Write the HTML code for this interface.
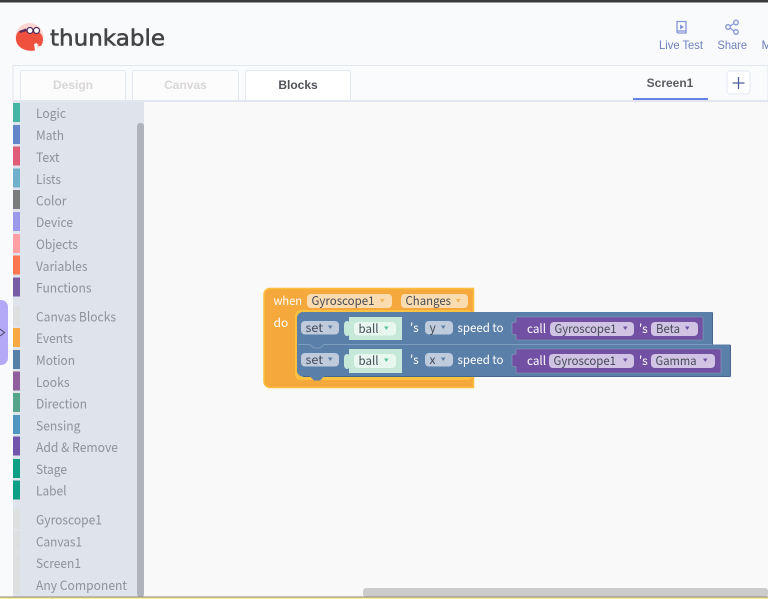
<!DOCTYPE html>
<html><head><meta charset="utf-8">
<style>
html,body{margin:0;padding:0;width:768px;height:599px;overflow:hidden;background:#f9fafc}
svg{position:absolute;left:0;top:0;display:block}
.s{font-family:"Noto Sans CJK JP","Liberation Sans",sans-serif;font-size:13px;fill:#8e929b}
.b{font-family:"Noto Sans CJK JP","Liberation Sans",sans-serif;font-size:12px;fill:#fff}
.d{font-family:"Noto Sans CJK JP","Liberation Sans",sans-serif;font-size:12px;fill:#444a55}
.a{font-family:"Liberation Sans",sans-serif}
</style></head><body>
<svg width="768" height="599" viewBox="0 0 768 599" xmlns="http://www.w3.org/2000/svg">
<rect width="768" height="599" fill="#f9fafc"/>
<rect width="768" height="2.5" fill="#3a3a3c"/>
<!-- logo -->
<circle cx="29.5" cy="37" r="14" fill="#fbd5d1"/>
<path d="M18 32 C22 29 30 28 35 30 C41 32 43.5 37 43 41 C42 43 39 43 37 44 L36 50 C30 52 22 50 18 45 C15 41 15.500 35 18 32Z" fill="#f0513f"/>
<path d="M19 31 L26 28.500 L27 31 L20 33Z" fill="#5a2d5c"/>
<circle cx="30" cy="30.500" r="3" fill="#fff" stroke="#4d2a5c" stroke-width="1.200"/>
<circle cx="36.500" cy="30.500" r="3" fill="#fff" stroke="#4d2a5c" stroke-width="1.200"/>
<path d="M34 44 L37 43 L37 50 L35 50Z" fill="#fff"/>
<path d="M38 42 L43 42 L41 46 L38.500 46Z" fill="#f0513f"/>
<text x="50" y="45.500" font-family="'DejaVu Sans',sans-serif" font-size="22" fill="#444446" stroke="#444446" stroke-width=".55" textLength="115" lengthAdjust="spacingAndGlyphs">thunkable</text>
<!-- header actions -->
<g fill="none" stroke="#8496d4" stroke-width="1.300">
<path d="M677 21.500 H686 V33 H678.500 A1.500 1.500 0 0 1 677 31.500Z"/>
<path d="M677 31 H686"/>
</g>
<path d="M680 24.500 L684 27 L680 29.500Z" fill="#8496d4"/>
<g fill="none" stroke="#8496d4" stroke-width="1.300">
<circle cx="736" cy="22.500" r="2.300"/><circle cx="736" cy="32" r="2.300"/><circle cx="728" cy="27" r="2.300"/>
<path d="M730 26 L734 23.500 M730 28 L734 31"/>
</g>
<g class="a" font-size="12" fill="#6f80bd">
<text x="659" y="49" textLength="44" lengthAdjust="spacingAndGlyphs">Live Test</text>
<text x="717.500" y="49" textLength="29.500" lengthAdjust="spacingAndGlyphs">Share</text>
<text x="761.500" y="49">M</text>
</g>
<!-- panel -->
<rect x="13" y="65.500" width="755" height="36" fill="#fafbfd" stroke="#e2e7f1"/>
<rect x="144" y="102" width="624" height="495" fill="#f9f9f9"/>
<g fill="#fcfcfd" stroke="#e3e7f2">
<path d="M20.500 100.500 V72.500 a2 2 0 0 1 2-2 H123.500 a2 2 0 0 1 2 2 V100.500"/>
<path d="M132.500 100.500 V72.500 a2 2 0 0 1 2-2 H236.500 a2 2 0 0 1 2 2 V100.500"/>
<path d="M245.500 100.500 V72.500 a2 2 0 0 1 2-2 H348.500 a2 2 0 0 1 2 2 V100.500" fill="#fff"/>
</g>
<rect x="13" y="100" width="755" height="1.500" fill="#e2e6f1"/>
<g class="a" font-size="12" font-weight="700" text-anchor="middle">
<text x="73" y="89" fill="#d9d6d6">Design</text>
<text x="185.500" y="89" fill="#d9d6d6">Canvas</text>
<text x="298" y="89" fill="#50535a">Blocks</text>
<text x="670" y="87" fill="#5a5c62">Screen1</text>
</g>
<rect x="633" y="98" width="75" height="2" fill="#6682e8"/>
<rect x="727" y="71" width="23" height="23" rx="3" fill="#fff" stroke="#e3e7f2"/>
<path d="M738.500 77 V89 M732.500 83 H744.500" stroke="#4d5f94" stroke-width="1.300" fill="none"/>
<!-- sidebar -->
<rect x="13" y="102" width="131" height="495" fill="#dfe3eb"/>
<rect x="137" y="123" width="7" height="474" rx="3" fill="#b0b3b9"/>
<g>
<rect x="13" y="103" width="7" height="19" fill="#45b5a4"/>
<rect x="13" y="125" width="7" height="19" fill="#6485cc"/>
<rect x="13" y="146.500" width="7" height="19" fill="#e05c78"/>
<rect x="13" y="168.500" width="7" height="19" fill="#6fb0cc"/>
<rect x="13" y="190" width="7" height="19" fill="#7c7c7c"/>
<rect x="13" y="212" width="7" height="19" fill="#9c98ea"/>
<rect x="13" y="234" width="7" height="19" fill="#ff9ea3"/>
<rect x="13" y="255.500" width="7" height="19" fill="#ff7750"/>
<rect x="13" y="277.500" width="7" height="19" fill="#7a5ba6"/>
<rect x="13" y="306" width="7" height="20" fill="#dedfe0"/>
<rect x="13" y="328" width="7" height="19" fill="#f7a941"/>
<rect x="13" y="350" width="7" height="19" fill="#5780a8"/>
<rect x="13" y="371.500" width="7" height="19" fill="#915f9e"/>
<rect x="13" y="393" width="7" height="19" fill="#56a489"/>
<rect x="13" y="415" width="7" height="19" fill="#4f97c0"/>
<rect x="13" y="436.500" width="7" height="19" fill="#7355ab"/>
<rect x="13" y="459" width="7" height="19" fill="#0ea084"/>
<rect x="13" y="480.500" width="7" height="19" fill="#0ea084"/>
<rect x="13" y="509" width="7" height="20" fill="#dedfe0"/>
<rect x="13" y="531" width="7" height="20" fill="#dedfe0"/>
<rect x="13" y="553" width="7" height="20" fill="#dedfe0"/>
<rect x="13" y="574" width="7" height="20" fill="#dedfe0"/>
</g>
<g class="s" lengthAdjust="spacingAndGlyphs">
<text x="36" y="118" textLength="30" lengthAdjust="spacingAndGlyphs">Logic</text>
<text x="36" y="140" textLength="28" lengthAdjust="spacingAndGlyphs">Math</text>
<text x="36" y="162" textLength="23.500" lengthAdjust="spacingAndGlyphs">Text</text>
<text x="36" y="184" textLength="25" lengthAdjust="spacingAndGlyphs">Lists</text>
<text x="36" y="205.500" textLength="30.500" lengthAdjust="spacingAndGlyphs">Color</text>
<text x="36" y="227" textLength="37" lengthAdjust="spacingAndGlyphs">Device</text>
<text x="36" y="249" textLength="42" lengthAdjust="spacingAndGlyphs">Objects</text>
<text x="36" y="271" textLength="51.500" lengthAdjust="spacingAndGlyphs">Variables</text>
<text x="36" y="292.500" textLength="55.500" lengthAdjust="spacingAndGlyphs">Functions</text>
<text x="36" y="321.500" textLength="80" lengthAdjust="spacingAndGlyphs">Canvas Blocks</text>
<text x="36" y="343" textLength="37" lengthAdjust="spacingAndGlyphs">Events</text>
<text x="36" y="365" textLength="39" lengthAdjust="spacingAndGlyphs">Motion</text>
<text x="36" y="387" textLength="33.500" lengthAdjust="spacingAndGlyphs">Looks</text>
<text x="36" y="408.500" textLength="51" lengthAdjust="spacingAndGlyphs">Direction</text>
<text x="36" y="430.500" textLength="44.500" lengthAdjust="spacingAndGlyphs">Sensing</text>
<text x="36" y="452" textLength="82" lengthAdjust="spacingAndGlyphs">Add &amp; Remove</text>
<text x="36" y="474" textLength="31" lengthAdjust="spacingAndGlyphs">Stage</text>
<text x="36" y="495.500" textLength="30.500" lengthAdjust="spacingAndGlyphs">Label</text>
<text x="36" y="524.500" textLength="66" lengthAdjust="spacingAndGlyphs">Gyroscope1</text>
<text x="36" y="546.500" textLength="46" lengthAdjust="spacingAndGlyphs">Canvas1</text>
<text x="36" y="568" textLength="45" lengthAdjust="spacingAndGlyphs">Screen1</text>
<text x="36" y="590" textLength="91" lengthAdjust="spacingAndGlyphs">Any Component</text>
</g>
<!-- handle -->
<path d="M0 300 H1 a7 7 0 0 1 7 7 V358 a7 7 0 0 1-7 7 H0Z" fill="#b3a9f6"/>
<path d="M0 329 L4.500 332.500 L0 336" fill="none" stroke="#4a4a5a" stroke-width="1"/>
<!-- scrollbar & bottom -->
<rect x="363" y="588" width="405" height="9" rx="3" fill="#cccccc"/>
<rect x="0" y="596.500" width="768" height="1" fill="#8a8a80"/>
<rect x="0" y="597.500" width="768" height="1.500" fill="#f7ea9a"/>
<!-- orange block -->
<path d="M270 288.500 H473.500 V387.500 H270 a6 6 0 0 1-6-6 V294.500 a6 6 0 0 1 6-6Z" fill="#f5a93c" stroke="#fbbe3d" stroke-width="1.500"/>
<rect x="295" y="310" width="178.500" height="70" rx="6" fill="#fcc23f"/>
<!-- blue blocks -->
<path d="M303 312 H712.500 V344.500 H730.500 V376.500 H324 L320 380.500 H314 L310 376.500 H303 a6 6 0 0 1-6-6 V318 a6 6 0 0 1 6-6Z" fill="#5a7fa8"/>
<path d="M298 344.500 H310 L314 348 H320 L324 344.500 H712.500" fill="none" stroke="#7d9dc0" stroke-width="1"/>
<path d="M712.500 312.500 V344.500 M730.500 345 V376.500" stroke="#46688e" stroke-width="1" fill="none"/>
<path d="M303 376.500 H310 M324 376.500 H730.500" stroke="#46688e" stroke-width="1" fill="none"/>
<!-- top row -->
<text x="273.500" y="305" class="b" textLength="28.500" lengthAdjust="spacingAndGlyphs">when</text>
<text x="273.500" y="327" class="b">do</text>
<rect x="307" y="294" width="85" height="14" rx="4" fill="#fbdcb0"/>
<text x="311.500" y="305" class="d" textLength="63" lengthAdjust="spacingAndGlyphs">Gyroscope1</text>
<path d="M380 299 h4.500 l-2.250 3.500Z" fill="#f5b050"/>
<rect x="401" y="294" width="67" height="14" rx="4" fill="#fbdcb0"/>
<text x="405.500" y="305" class="d" textLength="45.500" lengthAdjust="spacingAndGlyphs">Changes</text>
<path d="M456 299 h4.500 l-2.250 3.500Z" fill="#f5b050"/>
<!-- row 1 -->
<rect x="301" y="321" width="38" height="13.500" rx="4" fill="#bdcbdc"/>
<text x="305.500" y="332" class="d" textLength="17.500" lengthAdjust="spacingAndGlyphs">set</text>
<path d="M328 325.500 h4.500 l-2.250 3.500Z" fill="#5a7fa8"/>
<path d="M349 317 H402 V340 H349 V335 a2 2 0 0 1 -2 1 a3 4 0 0 1-3-4 V325 a3 4 0 0 1 3-4 a2 2 0 0 1 2 1Z" fill="#c5e8d8"/>
<rect x="354" y="322" width="42" height="13.500" rx="4" fill="#e8f7f0"/>
<text x="358.500" y="333" class="d" textLength="20" lengthAdjust="spacingAndGlyphs">ball</text>
<path d="M384 326.500 h4.500 l-2.250 3.500Z" fill="#5cc49a"/>
<text x="410" y="332" class="b">'s</text>
<rect x="425" y="321" width="28" height="13.500" rx="4" fill="#bdcbdc"/>
<text x="429.500" y="332" class="d">y</text>
<path d="M441 325.500 h4.500 l-2.250 3.500Z" fill="#5a7fa8"/>
<text x="457.500" y="332" class="b" textLength="46" lengthAdjust="spacingAndGlyphs">speed to</text>
<path d="M516 317 H703 V340 H516 V335 L512 334 V323 L516 322Z" fill="#7250a3" stroke="#8c9fbb" stroke-width=".6"/>
<text x="527" y="333" class="b" textLength="19" lengthAdjust="spacingAndGlyphs">call</text>
<rect x="550" y="322" width="84" height="14" rx="4" fill="#d0c3e3"/>
<text x="554.500" y="333" class="d" textLength="62" lengthAdjust="spacingAndGlyphs">Gyroscope1</text>
<path d="M623 326.500 h4.500 l-2.250 3.500Z" fill="#7250a3"/>
<text x="639" y="333" class="b">'s</text>
<rect x="651" y="322" width="47" height="14" rx="4" fill="#d0c3e3"/>
<text x="656" y="333" class="d" textLength="24" lengthAdjust="spacingAndGlyphs">Beta</text>
<path d="M685 326.500 h4.500 l-2.250 3.500Z" fill="#7250a3"/>
<!-- row 2 -->
<rect x="301" y="353" width="38" height="13.500" rx="4" fill="#bdcbdc"/>
<text x="305.500" y="364" class="d" textLength="17.500" lengthAdjust="spacingAndGlyphs">set</text>
<path d="M328 357.500 h4.500 l-2.250 3.500Z" fill="#5a7fa8"/>
<path d="M349 349 H402 V373 H349 V368 a2 2 0 0 1 -2 1 a3 4 0 0 1-3-4 V358 a3 4 0 0 1 3-4 a2 2 0 0 1 2 1Z" fill="#c5e8d8"/>
<rect x="354" y="354" width="42" height="14" rx="4" fill="#e8f7f0"/>
<text x="358.500" y="365" class="d" textLength="20" lengthAdjust="spacingAndGlyphs">ball</text>
<path d="M384 358.500 h4.500 l-2.250 3.500Z" fill="#5cc49a"/>
<text x="410" y="364" class="b">'s</text>
<rect x="425" y="353" width="28" height="13.500" rx="4" fill="#bdcbdc"/>
<text x="429.500" y="364" class="d">x</text>
<path d="M441 357.500 h4.500 l-2.250 3.500Z" fill="#5a7fa8"/>
<text x="457.500" y="364" class="b" textLength="46" lengthAdjust="spacingAndGlyphs">speed to</text>
<path d="M516 349 H721 V373 H516 V367 L512 366 V355 L516 354Z" fill="#7250a3" stroke="#8c9fbb" stroke-width=".6"/>
<text x="527" y="365" class="b" textLength="19" lengthAdjust="spacingAndGlyphs">call</text>
<rect x="549" y="354" width="85" height="14" rx="4" fill="#d0c3e3"/>
<text x="553.500" y="365" class="d" textLength="62.500" lengthAdjust="spacingAndGlyphs">Gyroscope1</text>
<path d="M623 358.500 h4.500 l-2.250 3.500Z" fill="#7250a3"/>
<text x="639" y="365" class="b">'s</text>
<rect x="651" y="354" width="64" height="14" rx="4" fill="#d0c3e3"/>
<text x="655.500" y="365" class="d" textLength="41" lengthAdjust="spacingAndGlyphs">Gamma</text>
<path d="M703 358.500 h4.500 l-2.250 3.500Z" fill="#7250a3"/>
</svg>
</body></html>
